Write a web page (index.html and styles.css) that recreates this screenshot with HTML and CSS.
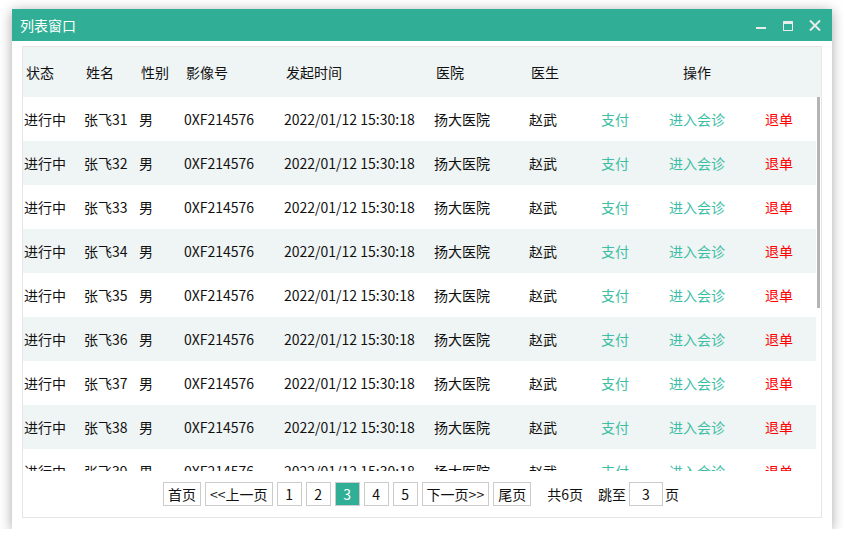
FILE: index.html
```html
<!DOCTYPE html>
<html lang="zh-CN">
<head>
<meta charset="utf-8">
<title>列表窗口</title>
<link rel="stylesheet" href="styles.css">
</head>
<body>
<div class="window">
  <div class="titlebar">
    <span class="title">列表窗口</span>
    <div class="controls">
      <svg class="ctl" viewBox="0 0 12 12" width="12" height="12"><rect x="1" y="8" width="10" height="2" fill="currentColor"/></svg>
      <svg class="ctl" viewBox="0 0 12 12" width="12" height="12"><rect x="1.5" y="2.5" width="9" height="9" fill="none" stroke="currentColor" stroke-width="1"/><rect x="1" y="2" width="10" height="3" fill="currentColor"/></svg>
      <svg class="ctl" viewBox="0 0 12 12" width="12" height="12"><path d="M1 1.5 L11 11.5 M11 1.5 L1 11.5" stroke="currentColor" stroke-width="2" fill="none"/></svg>
    </div>
  </div>
  <div class="content">
    <div class="panel">
      <div class="thead">
        <div class="th">状态</div>
        <div class="th">姓名</div>
        <div class="th">性别</div>
        <div class="th">影像号</div>
        <div class="th">发起时间</div>
        <div class="th">医院</div>
        <div class="th">医生</div>
        <div class="th th-ops">操作</div>
      </div>
      <div class="tbody">
        <div class="rows">
          <div class="row"><span>进行中</span><span>张飞31</span><span>男</span><span>0XF214576</span><span>2022/01/12 15:30:18</span><span>扬大医院</span><span>赵武</span><span class="link">支付</span><span class="link">进入会诊</span><span class="danger">退单</span></div>
          <div class="row"><span>进行中</span><span>张飞32</span><span>男</span><span>0XF214576</span><span>2022/01/12 15:30:18</span><span>扬大医院</span><span>赵武</span><span class="link">支付</span><span class="link">进入会诊</span><span class="danger">退单</span></div>
          <div class="row"><span>进行中</span><span>张飞33</span><span>男</span><span>0XF214576</span><span>2022/01/12 15:30:18</span><span>扬大医院</span><span>赵武</span><span class="link">支付</span><span class="link">进入会诊</span><span class="danger">退单</span></div>
          <div class="row"><span>进行中</span><span>张飞34</span><span>男</span><span>0XF214576</span><span>2022/01/12 15:30:18</span><span>扬大医院</span><span>赵武</span><span class="link">支付</span><span class="link">进入会诊</span><span class="danger">退单</span></div>
          <div class="row"><span>进行中</span><span>张飞35</span><span>男</span><span>0XF214576</span><span>2022/01/12 15:30:18</span><span>扬大医院</span><span>赵武</span><span class="link">支付</span><span class="link">进入会诊</span><span class="danger">退单</span></div>
          <div class="row"><span>进行中</span><span>张飞36</span><span>男</span><span>0XF214576</span><span>2022/01/12 15:30:18</span><span>扬大医院</span><span>赵武</span><span class="link">支付</span><span class="link">进入会诊</span><span class="danger">退单</span></div>
          <div class="row"><span>进行中</span><span>张飞37</span><span>男</span><span>0XF214576</span><span>2022/01/12 15:30:18</span><span>扬大医院</span><span>赵武</span><span class="link">支付</span><span class="link">进入会诊</span><span class="danger">退单</span></div>
          <div class="row"><span>进行中</span><span>张飞38</span><span>男</span><span>0XF214576</span><span>2022/01/12 15:30:18</span><span>扬大医院</span><span>赵武</span><span class="link">支付</span><span class="link">进入会诊</span><span class="danger">退单</span></div>
          <div class="row"><span>进行中</span><span>张飞39</span><span>男</span><span>0XF214576</span><span>2022/01/12 15:30:18</span><span>扬大医院</span><span>赵武</span><span class="link">支付</span><span class="link">进入会诊</span><span class="danger">退单</span></div>
        </div>
        <div class="scrollbar"><div class="thumb"></div></div>
      </div>
      <div class="pager">
        <span class="pbtn">首页</span>
        <span class="pbtn">&lt;&lt;上一页</span>
        <span class="pbtn num">1</span>
        <span class="pbtn num">2</span>
        <span class="pbtn num current">3</span>
        <span class="pbtn num">4</span>
        <span class="pbtn num">5</span>
        <span class="pbtn">下一页&gt;&gt;</span>
        <span class="pbtn">尾页</span>
        <span class="total">共6页</span>
        <span class="jump">跳至<input class="jump-input" type="text" value="3">页</span>
      </div>
    </div>
  </div>
</div>
</body>
</html>
```
FILE: styles.css
```css
* { box-sizing: border-box; }

html, body {
  margin: 0;
  padding: 0;
  background: #ffffff;
}

body {
  font-family: "Noto Sans CJK SC", "Microsoft YaHei", sans-serif;
  font-size: 14px;
  color: #111;
}

.window {
  width: 820px;
  height: 520px;
  margin: 9px 0 0 12px;
  background: #ffffff;
  box-shadow: 0 2px 12px rgba(0, 0, 0, 0.35);
  display: flex;
  flex-direction: column;
}

.titlebar {
  height: 32px;
  flex: none;
  background: #30af96;
  display: flex;
  align-items: center;
  justify-content: space-between;
  padding: 0 11px 0 8px;
}

.title {
  color: #ffffff;
  font-size: 14px;
  line-height: 32px;
}

.controls {
  display: flex;
  align-items: center;
  gap: 15px;
  color: #e8ecea;
}

.ctl { display: block; }

.content {
  flex: 1;
  padding: 5px 10px 11px 10px;
  display: flex;
}

.panel {
  flex: 1;
  border: 1px solid #e6e6e6;
  display: flex;
  flex-direction: column;
  min-height: 0;
}

.thead {
  height: 50px;
  flex: none;
  background: #eff4f4;
  display: grid;
  grid-template-columns: 60px 55px 45px 100px 150px 95px 72px 1fr;
  align-items: center;
}

.th {
  padding-left: 3px;
  white-space: nowrap;
}

.th-ops {
  padding-left: 83px;
}

.tbody {
  height: 374px;
  flex: none;
  display: flex;
  overflow: hidden;
}

.rows {
  flex: 1;
  overflow: hidden;
}

.scrollbar {
  width: 5px;
  flex: none;
  background: #ffffff;
}

.thumb {
  width: 3.6px;
  height: 211px;
  margin-left: 0.8px;
  background: #b4b4b4;
}

.row {
  height: 44px;
  display: grid;
  grid-template-columns: 60px 55px 45px 100px 150px 95px 72px 68px 96px 52px;
  align-items: center;
  background: #ffffff;
}

.row:nth-child(even) {
  background: #eff4f4;
}

.row > span {
  padding-left: 1px;
  white-space: nowrap;
}

.link { color: #3dbea4; }
.danger { color: #ff0000; }

.pager {
  flex: 1;
  display: flex;
  align-items: center;
  justify-content: center;
  gap: 4px;
  padding-right: 2px;
}

.pbtn {
  height: 24px;
  line-height: 22px;
  border: 1px solid #cccccc;
  padding: 0 4px;
  white-space: nowrap;
  background: #ffffff;
  color: #111;
}

.pbtn.num {
  width: 25px;
  padding: 0;
  text-align: center;
}

.pbtn.current {
  background: #30af96;
  color: #ffffff;
}

.total {
  margin-left: 12px;
}

.jump {
  margin-left: 11px;
  display: flex;
  align-items: center;
}

.jump-input {
  width: 34px;
  height: 24px;
  margin: 0 2px 0 3px;
  border: 1px solid #cccccc;
  padding: 0;
  text-align: center;
  font-family: inherit;
  font-size: 14px;
  color: #111;
  outline: none;
}
```
